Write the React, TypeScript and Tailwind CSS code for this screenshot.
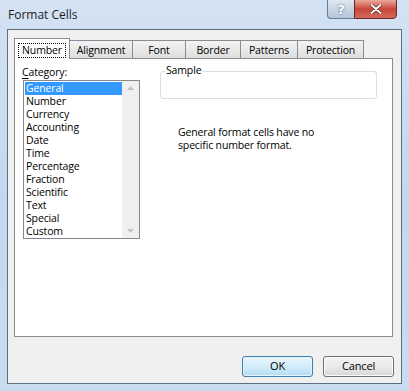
import React from 'react';

const categories = [
  'General',
  'Number',
  'Currency',
  'Accounting',
  'Date',
  'Time',
  'Percentage',
  'Fraction',
  'Scientific',
  'Text',
  'Special',
  'Custom',
];

const tabs = ['Number', 'Alignment', 'Font', 'Border', 'Patterns', 'Protection'];

export default function App() {
  return (
    <div className="w-[409px] h-[391px] overflow-hidden bg-gradient-to-b from-[#d3e3f4] via-[#c3d7ee] to-[#cadcf0] flex flex-col text-[10.5px] tracking-[-0.15px] text-black font-['Open_Sans',sans-serif]">
      {/* Title bar */}
      <div className="h-[29px] flex justify-between shrink-0">
        <div className="pl-2 pt-[6px] text-[12px] tracking-normal text-[#1e1e1e]">Format Cells</div>
        <div className="flex items-start pr-[12px]">
          <HelpButton />
          <CloseButton />
        </div>
      </div>

      {/* Client area */}
      <div className="mx-[7px] h-[355px] border border-[#5d6e80] bg-[#f0f0f0] flex flex-col px-[6px] pt-[8px]">
        {/* Tabs */}
        <div className="flex items-end h-[21px] relative z-10">
          {tabs.map((t, i) =>
            i === 0 ? (
              <div
                key={t}
                className="h-[21px] w-[56px] bg-white border border-b-0 border-[#898c95] flex items-center justify-center pt-[2px]"
              >
                <span className="border border-dotted border-black px-[3px] leading-[13px]">{t}</span>
              </div>
            ) : (
              <div
                key={t}
                className={`h-[18px] mb-[1px] pt-[3px] bg-gradient-to-b from-[#f3f3f3] to-[#dedede] border border-l-0 border-b-0 border-[#898c95] flex items-center justify-center ${
                  t === 'Alignment' ? 'w-[63px]' : t === 'Font' ? 'w-[53px]' : t === 'Border' ? 'w-[55px]' : t === 'Patterns' ? 'w-[57px]' : 'w-[66px]'
                }`}
              >
                {t}
              </div>
            )
          )}
        </div>

        {/* Tab panel */}
        <div className="-mt-[1px] h-[279px] w-[379px] bg-white border border-[#898c95] flex gap-[21px] pl-[7px] pt-[5px]">
          {/* Category */}
          <div className="flex flex-col w-[117px] pt-[2px]">
            <div className="leading-[13px] h-[14px]">
              <span className="underline underline-offset-2">C</span>ategory:
            </div>
            <div className="ml-[1px] h-[159px] w-[117px] border border-[#828790] flex">
              <div className="flex-1 flex flex-col pt-[1px] pl-[1px]">
                {categories.map((c, i) => (
                  <div
                    key={c}
                    className={`h-[13px] leading-[13px] pl-[1px] ${i === 0 ? 'bg-[#3399ff] text-white' : ''}`}
                  >
                    {c}
                  </div>
                ))}
              </div>
              <div className="w-[17px] bg-[#f0f0f0] flex flex-col justify-between items-center py-[5px]">
                <svg width="7" height="4" viewBox="0 0 7 4">
                  <path d="M0 4 L3.5 0 L7 4 Z" fill="#c2c2c2" />
                </svg>
                <svg width="7" height="4" viewBox="0 0 7 4">
                  <path d="M0 0 L3.5 4 L7 0 Z" fill="#c2c2c2" />
                </svg>
              </div>
            </div>
          </div>

          {/* Sample + description */}
          <div className="flex flex-col pt-[7px]">
            <div className="relative w-[217px] h-[28px] border border-[#d5dfe5] rounded-[3px]">
              <span className="absolute -top-[8px] left-[4px] bg-white px-[1px] leading-[13px]">Sample</span>
            </div>
            <div className="mt-[27px] pl-[18px] leading-[13px]">
              General format cells have no
              <br />
              specific number format.
            </div>
          </div>
        </div>

        {/* Buttons */}
        <div className="flex justify-end gap-[10px] mt-[19px] w-[380px]">
          <button className="w-[71px] h-[21px] rounded-[3px] border border-[#3c7fb1] bg-gradient-to-b from-[#eaf6fd] via-[#d3ecfa] to-[#b4dcf3] shadow-[inset_0_0_0_1px_#e4f4fc] text-[11px]">
            OK
          </button>
          <button className="w-[71px] h-[21px] rounded-[3px] border border-[#707070] bg-gradient-to-b from-[#f2f2f2] via-[#ebebeb] to-[#d6d6d6] shadow-[inset_0_0_0_1px_#fcfcfc] text-[11px]">
            Cancel
          </button>
        </div>
      </div>
    </div>
  );
}

function HelpButton() {
  return (
    <div className="w-[27px] h-[20px] -mt-[1px] rounded-bl-[4px] border border-r-0 border-[#6a7c90] bg-gradient-to-b from-[#dfe8f2] via-[#c8d5e4] to-[#b4c6da] flex items-center justify-center">
      <span className="text-[13px] font-bold text-white leading-none [text-shadow:0_0_2px_#3f4f62] font-['DejaVu_Sans',sans-serif]">?</span>
    </div>
  );
}

function CloseButton() {
  return (
    <div className="w-[43px] h-[20px] -mt-[1px] rounded-br-[4px] border border-[#6b2a2a] bg-gradient-to-b from-[#e9a99c] via-[#c9463a] to-[#d26a5d] flex items-center justify-center">
      <svg width="12" height="10" viewBox="0 0 12 10">
        <path d="M1.5 1 L10.5 9 M10.5 1 L1.5 9" stroke="#4a1d1d" strokeWidth="3.2" strokeLinecap="round" />
        <path d="M1.5 1 L10.5 9 M10.5 1 L1.5 9" stroke="#ffffff" strokeWidth="2" strokeLinecap="round" />
      </svg>
    </div>
  );
}
